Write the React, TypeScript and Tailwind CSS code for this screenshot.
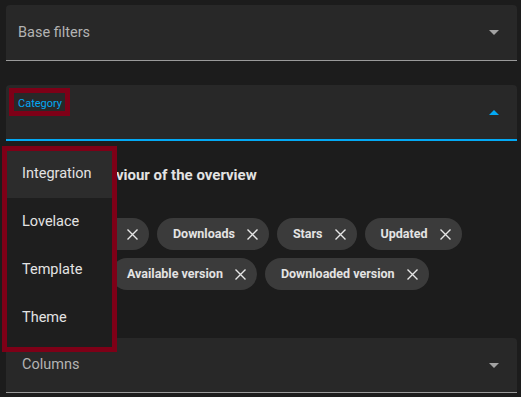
import React from 'react';

const Arrow: React.FC<{ up?: boolean }> = ({ up }) => (
  <svg width="10" height="5" viewBox="0 0 10 5" className="shrink-0">
    {up ? (
      <polygon points="0,5 5,0 10,5" fill="#03a9f4" />
    ) : (
      <polygon points="0,0 10,0 5,5" fill="#a3a3a3" />
    )}
  </svg>
);

const CloseIcon: React.FC = () => (
  <svg width="11" height="11" viewBox="0 0 11 11" className="shrink-0">
    <path d="M0.5 0.5 L10.5 10.5 M10.5 0.5 L0.5 10.5" stroke="#e6e6e6" strokeWidth="1.4" fill="none" />
  </svg>
);

const Chip: React.FC<{ label: string; className?: string }> = ({ label, className = '' }) => (
  <div className={`h-[32px] rounded-full bg-[#3b3b3b] pl-[16px] pr-[11px] flex items-center justify-between gap-[12px] ${className}`}>
    <span className="text-[12.5px] font-bold text-[#e3e3e3] leading-none">{label}</span>
    <CloseIcon />
  </div>
);

const App: React.FC = () => {
  const menu = ['Integration', 'Lovelace', 'Template', 'Theme'];

  return (
    <div className="relative w-[521px] h-[397px] overflow-hidden bg-[#1c1c1c] pt-[5px] font-['Roboto',sans-serif]">
      {/* Base filters */}
      <div className="mx-[6px] mr-[4px] h-[56px] rounded-t-[4px] bg-[#282828] border-b border-[#9a9a9a] flex items-center justify-between pl-[12px] pr-[18px]">
        <span className="text-[14.5px] text-[#b3b3b3]">Base filters</span>
        <Arrow />
      </div>

      {/* Category (open) */}
      <div className="mt-[24px] mx-[6px] mr-[4px] h-[56px] rounded-t-[4px] bg-[#282828] border-b-2 border-[#03a9f4] flex items-center justify-between pl-[12px] pr-[18px]">
        <span className="self-start mt-[11px] text-[11px] text-[#03a9f4]">Category</span>
        <Arrow up />
      </div>

      <div className="pl-[22px]">
        <div className="mt-[25px] pl-[6px] text-[15px] font-bold text-[#e3e3e3] leading-[18px]">
          Change behaviour of the overview
        </div>
        <div className="mt-[34px] flex gap-[8px]">
          <Chip label="Description" className="w-[127px]" />
          <Chip label="Downloads" />
          <Chip label="Stars" />
          <Chip label="Updated" />
        </div>
        <div className="mt-[8px] flex gap-[8px]">
          <Chip label="Name" className="w-[81px]" />
          <Chip label="Available version" />
          <Chip label="Downloaded version" />
        </div>
      </div>

      {/* Columns */}
      <div className="mt-[48px] mx-[6px] mr-[4px] h-[55px] rounded-t-[4px] bg-[#282828] border-b border-[#9a9a9a] flex items-center justify-between pl-[16px] pr-[18px]">
        <span className="text-[14.5px] text-[#b3b3b3]">Columns</span>
        <Arrow />
      </div>

      {/* Dropdown menu */}
      <div className="absolute left-[7px] top-[150px] w-[105px] bg-[#1e1e1e] pb-[5px]">
        {menu.map((item, i) => (
          <div
            key={item}
            className={`h-[48px] flex items-center pl-[15px] text-[14.5px] text-[#e3e3e3] ${i === 0 ? 'bg-[#2c2c2c]' : ''}`}
          >
            {item}
          </div>
        ))}
      </div>

      {/* annotation boxes */}
      <div className="absolute left-[9px] top-[88px] w-[61px] h-[28px] border-[5px] border-[#7e0017]" />
      <div className="absolute left-[2px] top-[146px] w-[115px] h-[206px] border-[5px] border-[#7e0017]" />
    </div>
  );
};

export default App;
